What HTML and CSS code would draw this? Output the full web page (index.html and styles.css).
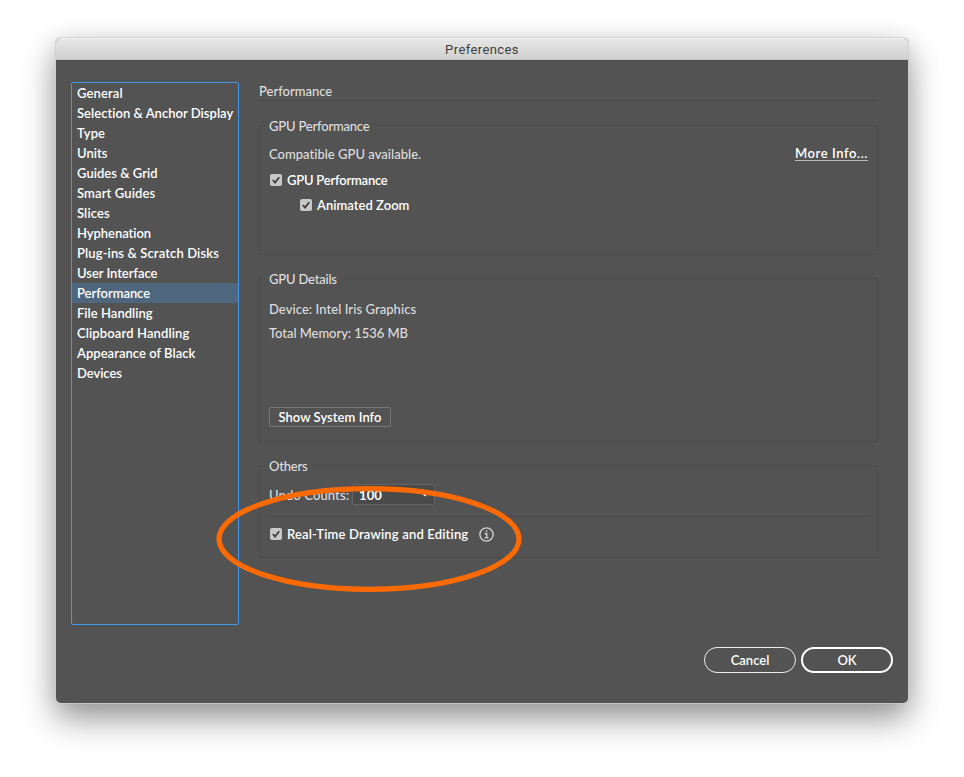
FILE: index.html
```
<!DOCTYPE html>
<html lang="en">
<head>
<meta charset="utf-8">
<title>Preferences</title>
<link rel="stylesheet" href="styles.css">
</head>
<body>
<div class="dialog">
  <header class="titlebar">Preferences</header>
  <div class="content">
    <ul class="sidebar">
      <li>General</li>
      <li class="snug">Selection &amp; Anchor Display</li>
      <li>Type</li>
      <li class="snug">Units</li>
      <li class="snug">Guides &amp; Grid</li>
      <li>Smart Guides</li>
      <li>Slices</li>
      <li class="tight">Hyphenation</li>
      <li>Plug-ins &amp; Scratch Disks</li>
      <li class="tight">User Interface</li>
      <li class="selected tight">Performance</li>
      <li class="snug">File Handling</li>
      <li>Clipboard Handling</li>
      <li class="snug">Appearance of Black</li>
      <li class="tight">Devices</li>
    </ul>
    <main class="main">
      <h1 class="heading">Performance</h1>
      <section class="group group-gpu">
        <h2 class="legend">GPU Performance</h2>
        <div class="status-row">
          <span>Compatible GPU available.</span>
          <a class="more">More Info...</a>
        </div>
        <label class="check tighter"><span class="box"><svg viewBox="0 0 12 12"><path d="M2.8 6 5 8.5 9.2 3.3"/></svg></span>GPU Performance</label>
        <label class="check nested snug"><span class="box"><svg viewBox="0 0 12 12"><path d="M2.8 6 5 8.5 9.2 3.3"/></svg></span>Animated Zoom</label>
      </section>
      <section class="group group-details">
        <h2 class="legend">GPU Details</h2>
        <p class="detail">Device: Intel Iris Graphics</p>
        <p class="detail tight">Total Memory: 1536 MB</p>
        <button class="info-button">Show System Info</button>
      </section>
      <section class="group group-others">
        <h2 class="legend">Others</h2>
        <div class="undo">
          <span class="undo-label">Undo Counts:</span>
          <span class="select">100<svg viewBox="0 0 8 5"><path d="M1.4 1 4 3.4 6.6 1"/></svg></span>
        </div>
        <div class="realtime">
          <label class="check"><span class="box"><svg viewBox="0 0 12 12"><path d="M2.8 6 5 8.5 9.2 3.3"/></svg></span>Real-Time Drawing and Editing</label>
          <svg class="info" viewBox="0 0 15 15"><circle cx="7.5" cy="7.5" r="6.6"/><path d="M5.8 6.7h1.9v4M5.6 10.9h4M7.5 3.4v1.8"/></svg>
        </div>
      </section>
    </main>
  </div>
  <footer class="actions">
    <button class="pill">Cancel</button>
    <button class="pill primary">OK</button>
  </footer>
  <svg class="highlight" viewBox="0 0 306 108"><ellipse cx="153" cy="54" rx="150" ry="50.3"/></svg>
</div>
</body>
</html>
```
FILE: styles.css
```
* { box-sizing: border-box; }
body {
  min-height: 777px;
  margin: 0;
  padding: 38px 56px 0;
  background: #fff;
  color: #fff;
  font: 600 13px/20px Lato, "Noto Sans", sans-serif;
  letter-spacing: 0.12px;
}
h1, h2, p, ul { margin: 0; padding: 0; font: inherit; }
.dialog {
  position: relative;
  width: 852px;
  height: 665px;
  border-radius: 5px;
  background: #535353;
  box-shadow: 0 0 0 1px rgba(205, 205, 205, 0.8), 0 16px 34px rgba(0, 0, 0, 0.38), 0 4px 26px rgba(0, 0, 0, 0.12);
}
.titlebar {
  height: 22px;
  border-top: 1px solid #f4f4f4;
  border-bottom: 1px solid #c4c4c4;
  border-radius: 5px 5px 0 0;
  background: linear-gradient(#e6e6e6, #d1d1d1);
  color: #404040;
  text-align: center;
  font-family: Roboto, sans-serif;
  font-weight: 400;
  line-height: 22px;
  letter-spacing: 0.4px;
}
.content {
  display: flex;
  gap: 20px;
  height: 587px;
  padding: 22px 30px 0 15px;
}
.sidebar {
  width: 168px;
  height: 543px;
  border: 1px solid #4499ee;
  border-radius: 2px;
  list-style: none;
}
.sidebar li { height: 20px; padding-left: 5px; line-height: 21px; white-space: nowrap; }
.snug { letter-spacing: 0.03px; }
.tight { letter-spacing: -0.05px; }
.tighter { letter-spacing: -0.22px; }
.sidebar .selected { background: #4f667f; }
.main { flex: 1; color: #dedede; font-weight: 500; }
.heading { height: 19px; border-bottom: 1px solid #4a4a4a; line-height: 19px; letter-spacing: 0; }
.group {
  padding: 0 9px;
  border: 1px solid #4a4a4a;
  border-radius: 2px;
}
.legend {
  width: max-content;
  height: 20px;
  margin: -10px 0 0 -4px;
  padding: 0 5px 0 4px;
  background: #535353;
  letter-spacing: -0.2px;
}
.group-gpu { height: 130px; margin-top: 24px; }
.status-row { display: flex; justify-content: space-between; margin-top: 8px; letter-spacing: 0.02px; }
.more {
  height: 17px;
  border-bottom: 1px solid #bbb;
  color: #fff;
  font-weight: 600;
  line-height: 18px;
  letter-spacing: 0.58px;
}
.check {
  display: flex;
  align-items: center;
  gap: 5px;
  height: 20px;
  padding-left: 1px;
  color: #fff;
  font-weight: 600;
}
.group-gpu .check { margin-top: 6px; }
.group-gpu .nested { margin-top: 5px; padding-left: 31px; }
.box { width: 12px; height: 12px; border-radius: 2px; background: #c8c8c8; }
.box svg { display: block; fill: none; stroke: #3c3c3c; stroke-width: 1.8; }
.group-details { height: 164px; margin-top: 23px; }
.detail { height: 24px; }
.legend + .detail { margin-top: 10px; letter-spacing: 0.07px; }
.info-button {
  display: block;
  width: 122px;
  height: 20px;
  margin-top: 60px;
  padding: 0;
  border: 1px solid #777;
  border-radius: 2px;
  background: none;
  color: #fff;
  font: inherit;
  font-weight: 600;
  line-height: 18px;
  letter-spacing: 0.05px;
}
.group-others { height: 93px; margin-top: 23px; }
.undo { display: flex; height: 41px; border-bottom: 1px solid #4a4a4a; }
.undo-label { width: 83px; padding-top: 9px; }
.select {
  display: flex;
  align-items: center;
  justify-content: space-between;
  width: 83px;
  height: 21px;
  margin-top: 8px;
  padding: 0 5px 0 6px;
  border: 1px solid #646464;
  border-radius: 2px;
  background: #4a4a4a;
  color: #fff;
  font-weight: 700;
}
.select svg { width: 8px; fill: none; stroke: #fff; stroke-width: 1.6; }
.realtime { display: flex; align-items: center; gap: 11px; margin-top: 7px; }
.realtime .check { letter-spacing: 0.17px; }
.info { width: 15px; height: 15px; fill: none; stroke: #d0d0d0; stroke-width: 1.4; }
.actions { display: flex; justify-content: flex-end; gap: 5px; padding-right: 15px; }
.pill {
  width: 92px;
  height: 26px;
  padding: 0;
  border: 1px solid #eee;
  border-radius: 13px;
  background: none;
  color: #fff;
  font: inherit;
  letter-spacing: 0;
}
.primary { border: 2px solid #fff; }
.highlight {
  position: absolute;
  left: 160px;
  top: 447px;
  width: 306px;
  height: 108px;
  fill: none;
  stroke: #ff6a00;
  stroke-width: 5.2;
}
```
